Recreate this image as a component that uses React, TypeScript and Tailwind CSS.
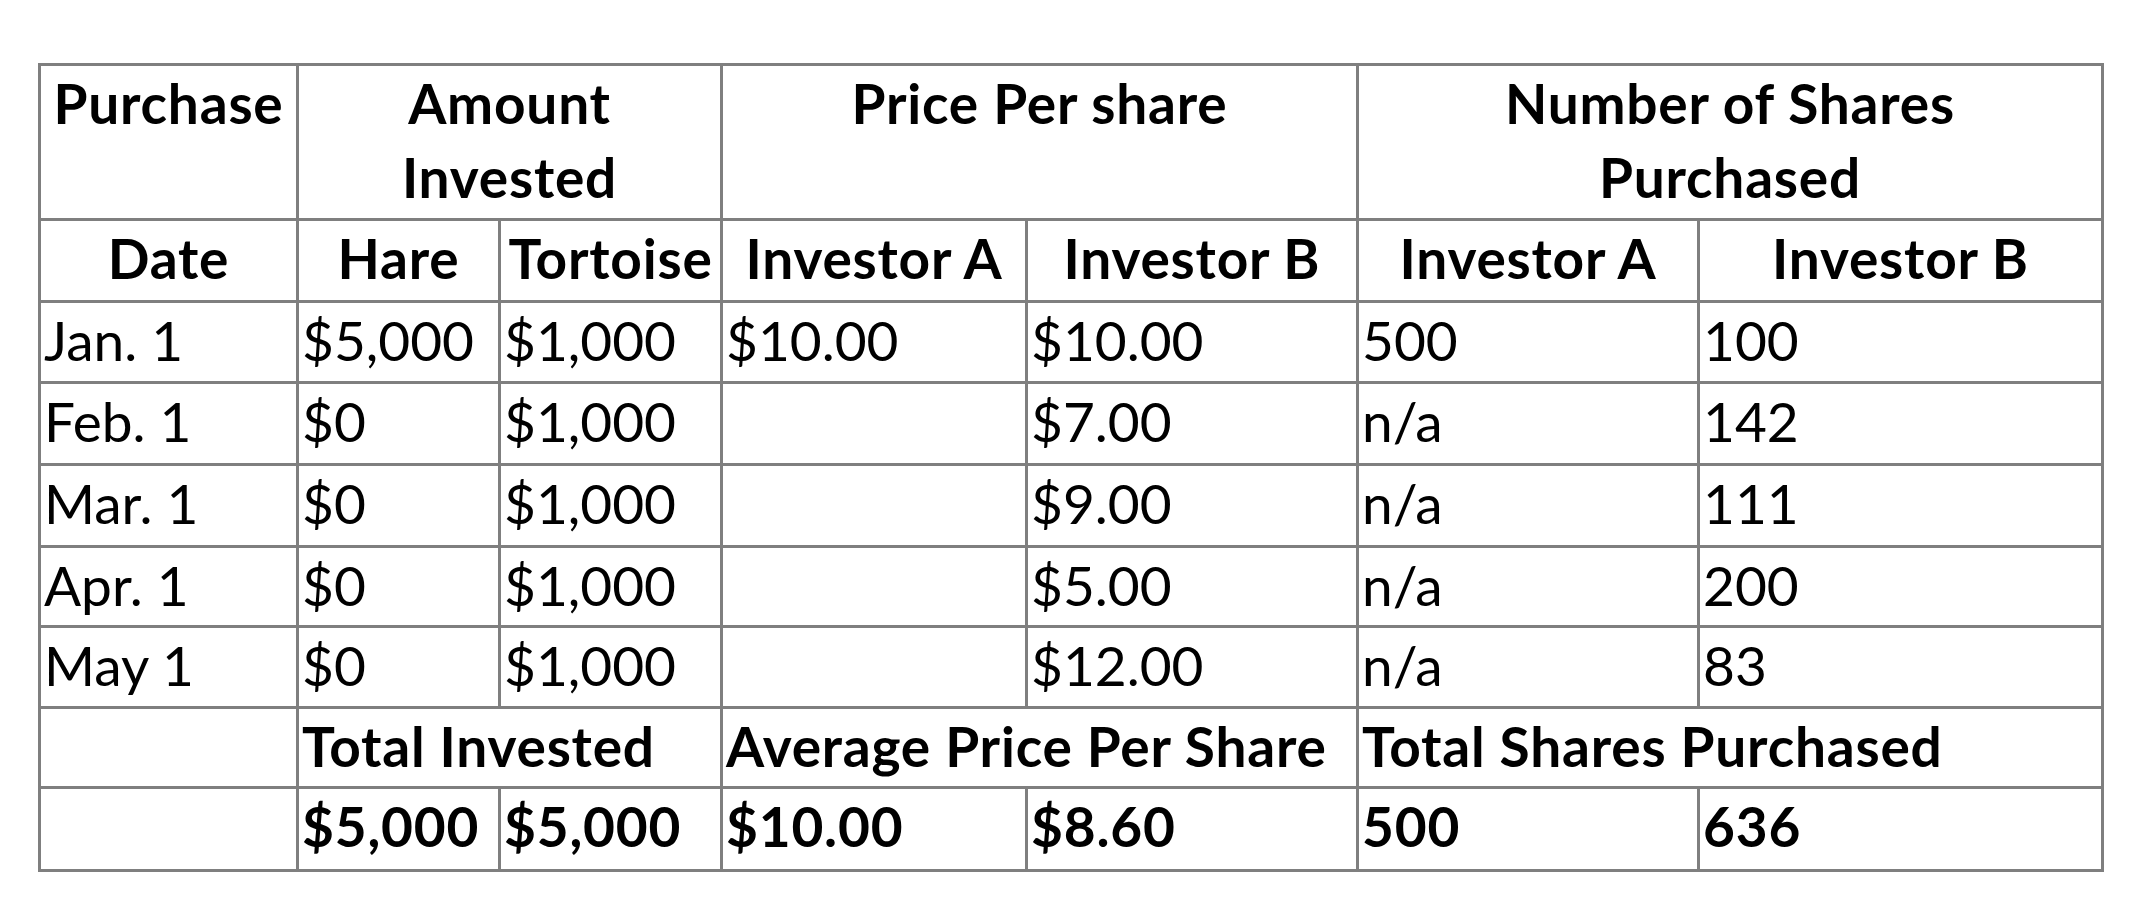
import React from "react";

const H = "bg-white font-bold text-center tracking-[0.8px]";
const D = "bg-white pl-[3px] whitespace-nowrap";
const B = "bg-white font-bold pl-[3px] whitespace-nowrap tracking-[0.8px]";

const rows: string[][] = [
  ["Jan. 1", "$5,000", "$1,000", "$10.00", "$10.00", "500", "100"],
  ["Feb. 1", "$0", "$1,000", "", "$7.00", "n/a", "142"],
  ["Mar. 1", "$0", "$1,000", "", "$9.00", "n/a", "111"],
  ["Apr. 1", "$0", "$1,000", "", "$5.00", "n/a", "200"],
  ["May 1", "$0", "$1,000", "", "$12.00", "n/a", "83"],
];

export default function App() {
  return (
    <div className="w-[2144px] h-[920px] bg-white overflow-hidden">
      <div className="ml-[38px] pt-[63px]">
        <div className="grid w-fit grid-cols-[255px_199px_219px_302px_328px_338px_401px] grid-rows-[152px_79px_78px_79px_79px_77px_78px_77px_80px] gap-[3px] p-[3px] bg-[#7f7f7f] text-black text-[55px] leading-[74px] font-['Lato',sans-serif]">
          <div className={H}>Purchase</div>
          <div className={`${H} col-span-2`}>
            Amount
            <br />
            Invested
          </div>
          <div className={`${H} col-span-2`}>Price Per share</div>
          <div className={`${H} col-span-2`}>
            Number of Shares
            <br />
            Purchased
          </div>

          <div className={H}>Date</div>
          <div className={H}>Hare</div>
          <div className={H}>Tortoise</div>
          <div className={H}>Investor A</div>
          <div className={H}>Investor B</div>
          <div className={H}>Investor A</div>
          <div className={H}>Investor B</div>

          {rows.map((r, i) =>
            r.map((c, j) => (
              <div key={`${i}-${j}`} className={D}>
                {c}
              </div>
            ))
          )}

          <div className="bg-white"></div>
          <div className={`${B} col-span-2`}>Total Invested</div>
          <div className={`${B} col-span-2`}>Average Price Per Share</div>
          <div className={`${B} col-span-2`}>Total Shares Purchased</div>

          <div className="bg-white"></div>
          <div className={B}>$5,000</div>
          <div className={B}>$5,000</div>
          <div className={B}>$10.00</div>
          <div className={B}>$8.60</div>
          <div className={B}>500</div>
          <div className={B}>636</div>
        </div>
      </div>
    </div>
  );
}
